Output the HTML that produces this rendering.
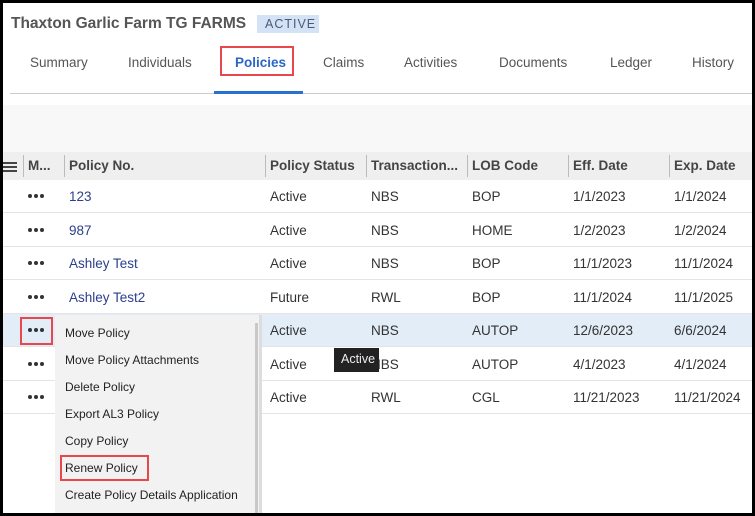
<!DOCTYPE html>
<html><head><style>
*{margin:0;padding:0;box-sizing:border-box}
body{width:755px;height:516px;background:#000;position:relative;overflow:hidden;font-family:"Liberation Sans",sans-serif}
#p{position:absolute;left:3px;top:3px;width:749px;height:510px;background:#fff;overflow:hidden}
.a{position:absolute;white-space:nowrap}
.t{font-size:13.5px;color:#555;top:52px}
.row{position:absolute;left:0;width:749px;height:33px;border-bottom:1px solid #e4e4e4;font-size:13.5px;color:#333}
.row span{position:absolute;top:9px}
.dots{position:absolute;left:25px;top:14px;width:4px;height:4px;border-radius:50%;background:#333;box-shadow:6px 0 0 #333,12px 0 0 #333}
.hd span{position:absolute;top:6px;font-weight:bold;font-size:13.5px;color:#444}
.sep{position:absolute;top:3px;width:1px;height:22px;background:#bbb}
.m{position:absolute;left:62px;font-size:12px;color:#222}
</style></head><body><div id="p">
<div class="a" style="left:8px;top:12px;font-size:15.5px;font-weight:bold;color:#555">Thaxton Garlic Farm TG FARMS</div>
<div class="a" style="left:254px;top:12px;width:62px;height:18px;background:#d3e3f5;color:#4a5a78;font-size:12.5px;letter-spacing:1px;padding:2px 0 0 8px">ACTIVE</div>
<div class="a t" style="left:27px">Summary</div>
<div class="a t" style="left:125px">Individuals</div>
<div class="a t" style="left:232px;color:#2a66c8;font-weight:bold">Policies</div>
<div class="a" style="left:217px;top:43px;width:74px;height:30px;border:2px solid #e8484b"></div>
<div class="a t" style="left:320px">Claims</div>
<div class="a t" style="left:401px">Activities</div>
<div class="a t" style="left:496px">Documents</div>
<div class="a t" style="left:607px">Ledger</div>
<div class="a t" style="left:689px">History</div>
<div class="a" style="left:7px;top:90px;width:742px;height:1px;background:#ccc"></div>
<div class="a" style="left:211px;top:88px;width:89px;height:3px;background:#2a70d0"></div>
<div class="a" style="left:0;top:102px;width:749px;height:47px;background:#f8f8f8"></div>
<div class="row hd" style="top:149px;height:28px;background:#efefef;border:none">
<div class="a" style="left:0;top:10px;width:14px;height:2px;background:#444;box-shadow:0 4px 0 #444,0 8px 0 #444"></div>
<div class="sep" style="left:20px"></div><span style="left:25px">M...</span>
<div class="sep" style="left:61px"></div><span style="left:66px">Policy No.</span>
<div class="sep" style="left:262px"></div><span style="left:267px">Policy Status</span>
<div class="sep" style="left:363px"></div><span style="left:368px">Transaction...</span>
<div class="sep" style="left:464px"></div><span style="left:469px">LOB Code</span>
<div class="sep" style="left:565px"></div><span style="left:570px">Eff. Date</span>
<div class="sep" style="left:666px"></div><span style="left:671px">Exp. Date</span>
</div>
<div class="row" style="top:177px"><div class="dots"></div><span style="left:66px;color:#2b3f8c">123</span><span style="left:267px">Active</span><span style="left:368px">NBS</span><span style="left:469px">BOP</span><span style="left:570px">1/1/2023</span><span style="left:671px">1/1/2024</span></div>
<div class="row" style="top:211px"><div class="dots"></div><span style="left:66px;color:#2b3f8c">987</span><span style="left:267px">Active</span><span style="left:368px">NBS</span><span style="left:469px">HOME</span><span style="left:570px">1/2/2023</span><span style="left:671px">1/2/2024</span></div>
<div class="row" style="top:244px"><div class="dots"></div><span style="left:66px;color:#2b3f8c">Ashley Test</span><span style="left:267px">Active</span><span style="left:368px">NBS</span><span style="left:469px">BOP</span><span style="left:570px">11/1/2023</span><span style="left:671px">11/1/2024</span></div>
<div class="row" style="top:278px"><div class="dots"></div><span style="left:66px;color:#2b3f8c">Ashley Test2</span><span style="left:267px">Future</span><span style="left:368px">RWL</span><span style="left:469px">BOP</span><span style="left:570px">11/1/2024</span><span style="left:671px">11/1/2025</span></div>
<div class="row" style="top:311px;background:#e3edf8"><div class="dots"></div><span style="left:267px">Active</span><span style="left:368px">NBS</span><span style="left:469px">AUTOP</span><span style="left:570px">12/6/2023</span><span style="left:671px">6/6/2024</span></div>
<div class="row" style="top:345px"><div class="dots"></div><span style="left:267px">Active</span><span style="left:368px">NBS</span><span style="left:469px">AUTOP</span><span style="left:570px">4/1/2023</span><span style="left:671px">4/1/2024</span></div>
<div class="row" style="top:378px"><div class="dots"></div><span style="left:267px">Active</span><span style="left:368px">RWL</span><span style="left:469px">CGL</span><span style="left:570px">11/21/2023</span><span style="left:671px">11/21/2024</span></div>
<div class="a" style="left:17px;top:314px;width:33px;height:28px;border:2px solid #e8484b"></div>
<div class="a" style="left:52px;top:312px;width:207px;height:198px;background:#f2f2f2;border-right:3px solid #ddd"></div>
<div class="a" style="left:252px;top:320px;width:3px;height:190px;background:#c8c8c8"></div>
<div class="a m" style="top:323px">Move Policy</div>
<div class="a m" style="top:350px">Move Policy Attachments</div>
<div class="a m" style="top:377px">Delete Policy</div>
<div class="a m" style="top:404px">Export AL3 Policy</div>
<div class="a m" style="top:431px">Copy Policy</div>
<div class="a m" style="top:458px">Renew Policy</div>
<div class="a" style="left:57px;top:452px;width:89px;height:26px;border:2px solid #e8484b"></div>
<div class="a m" style="top:485px">Create Policy Details Application</div>
<div class="a" style="left:331px;top:345px;width:45px;height:24px;background:#222;color:#eee;font-size:12.5px;padding:4px 0 0 7px">Active</div>
</div></body></html>
